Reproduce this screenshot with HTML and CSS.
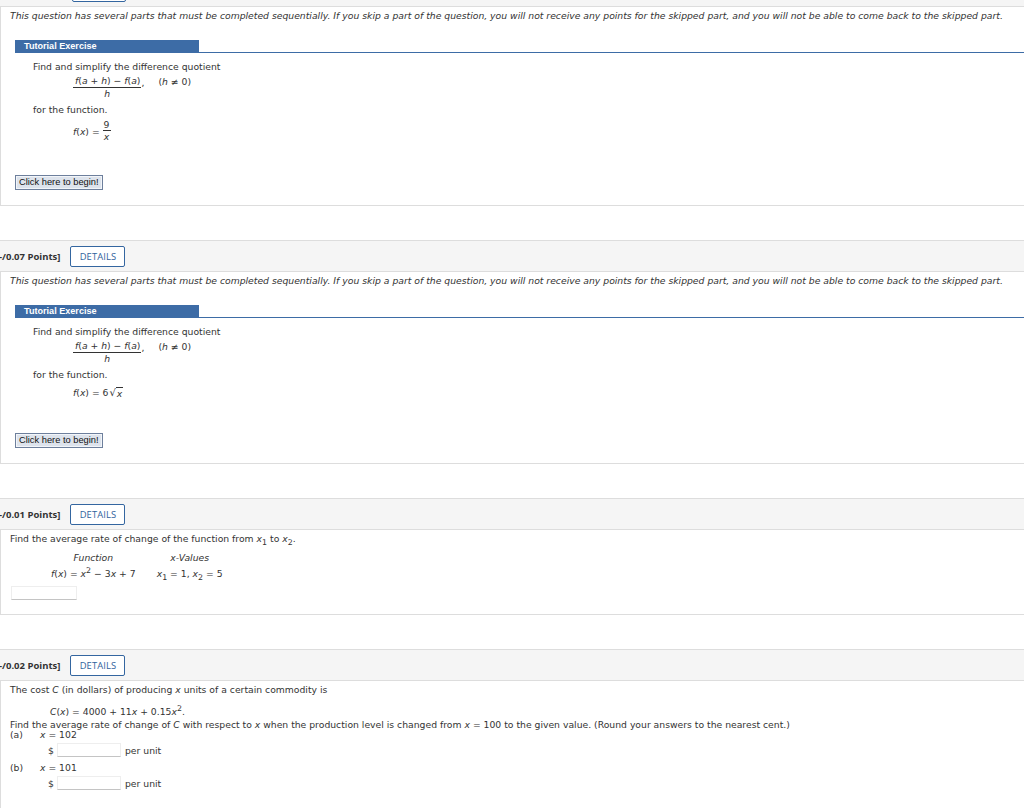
FILE: index.html
```html
<!DOCTYPE html>
<html lang="en">
<head>
<meta charset="utf-8">
<title>Questions</title>
<link rel="stylesheet" href="styles.css">
</head>
<body>

<section class="question q-partial">
  <div class="qhead qhead-top"><span class="details-edge"></span></div>
  <div class="qbody">
    <p class="note">This question has several parts that must be completed sequentially. If you skip a part of the question, you will not receive any points for the skipped part, and you will not be able to come back to the skipped part.</p>
    <div class="tutorial">
      <div class="tut-bar"><span class="tut-label">Tutorial Exercise</span></div>
      <div class="tut-content">
        <p class="line l-find">Find and simplify the difference quotient</p>
        <div class="formula dq">
          <span class="frac"><span class="num"><i>f</i>(<i>a</i> + <i>h</i>) − <i>f</i>(<i>a</i>)</span><span class="den"><i>h</i></span></span><span class="comma">,</span><span class="cond">(<i>h</i> ≠ 0)</span>
        </div>
        <p class="line l-for">for the function.</p>
        <div class="formula fx fx-frac">
          <span><i>f</i>(<i>x</i>) =&nbsp;</span><span class="frac small"><span class="num">9</span><span class="den"><i>x</i></span></span>
        </div>
      </div>
      <button class="begin" type="button">Click here to begin!</button>
    </div>
  </div>
</section>

<section class="question">
  <div class="qhead"><span class="pts">-/0.07 Points]</span><span class="details">DETAILS</span></div>
  <div class="qbody">
    <p class="note">This question has several parts that must be completed sequentially. If you skip a part of the question, you will not receive any points for the skipped part, and you will not be able to come back to the skipped part.</p>
    <div class="tutorial">
      <div class="tut-bar"><span class="tut-label">Tutorial Exercise</span></div>
      <div class="tut-content">
        <p class="line l-find">Find and simplify the difference quotient</p>
        <div class="formula dq">
          <span class="frac"><span class="num"><i>f</i>(<i>a</i> + <i>h</i>) − <i>f</i>(<i>a</i>)</span><span class="den"><i>h</i></span></span><span class="comma">,</span><span class="cond">(<i>h</i> ≠ 0)</span>
        </div>
        <p class="line l-for">for the function.</p>
        <div class="formula fx fx-root">
          <span><i>f</i>(<i>x</i>) = 6</span><span class="root"><span class="radical">√</span><span class="radicand"><i>x</i></span></span>
        </div>
      </div>
      <button class="begin begin-2" type="button">Click here to begin!</button>
    </div>
  </div>
</section>

<section class="question">
  <div class="qhead"><span class="pts">-/0.01 Points]</span><span class="details">DETAILS</span></div>
  <div class="qbody q3">
    <p class="line">Find the average rate of change of the function from <i>x</i><sub>1</sub> to <i>x</i><sub>2</sub>.</p>
    <div class="fn-table">
      <span class="th">Function</span>
      <span class="th"><i>x</i>-Values</span>
      <span class="td"><i>f</i>(<i>x</i>) = <i>x</i><sup>2</sup> − 3<i>x</i> + 7</span>
      <span class="td"><i>x</i><sub>1</sub> = 1, <i>x</i><sub>2</sub> = 5</span>
    </div>
    <input class="answer answer-wide" type="text" aria-label="answer">
  </div>
</section>

<section class="question">
  <div class="qhead"><span class="pts">-/0.02 Points]</span><span class="details">DETAILS</span></div>
  <div class="qbody q4">
    <p class="line">The cost <i>C</i> (in dollars) of producing <i>x</i> units of a certain commodity is</p>
    <p class="line cost-eq"><i>C</i>(<i>x</i>) = 4000 + 11<i>x</i> + 0.15<i>x</i><sup>2</sup>.</p>
    <p class="line tight">Find the average rate of change of <i>C</i> with respect to <i>x</i> when the production level is changed from <i>x</i> = 100 to the given value. (Round your answers to the nearest cent.)</p>
    <div class="parts">
      <span class="plabel">(a)</span><span class="pval"><i>x</i> = 102</span>
      <span></span><span class="arow"><span class="dollar">$</span><input class="answer" type="text" aria-label="part a"><span class="unit">per unit</span></span>
      <span class="plabel">(b)</span><span class="pval"><i>x</i> = 101</span>
      <span></span><span class="arow"><span class="dollar">$</span><input class="answer" type="text" aria-label="part b"><span class="unit">per unit</span></span>
    </div>
  </div>
</section>

</body>
</html>
```

FILE: styles.css
```css
html, body {
  margin: 0;
  padding: 0;
  background: #ffffff;
}

body {
  font-family: "DejaVu Sans", Verdana, sans-serif;
  font-size: 9.25px;
  color: #333333;
  overflow: hidden;
}

p { margin: 0; }

i { font-style: italic; }

sup {
  font-size: 85%;
  line-height: 0;
  vertical-align: 4px;
}

sub {
  font-size: 85%;
  line-height: 0;
  vertical-align: -3px;
}

.question {
  margin-bottom: 34px;
}

/* header band */
.qhead {
  display: flex;
  align-items: center;
  height: 30px;
  background: #f5f5f5;
  border-top: 1px solid #dddddd;
  border-bottom: 1px solid #dddddd;
}

.qhead-top {
  margin-top: -24px;
  border-top: none;
}

.details-edge {
  display: block;
  margin-left: 72px;
  width: 52px;
  height: 19px;
  border: 1px solid #3466a0;
  border-radius: 2px;
  background: #ffffff;
}

.pts {
  font-family: "Open Sans", "DejaVu Sans", sans-serif;
  font-weight: 700;
  font-size: 9.5px;
  color: #333333;
  margin-left: -1px;
}

.details {
  margin-left: 10px;
  width: 53px;
  height: 19px;
  border: 1px solid #3466a0;
  border-radius: 2px;
  background: #ffffff;
  color: #2f629c;
  font-family: "Open Sans", "DejaVu Sans", sans-serif;
  font-size: 9.4px;
  letter-spacing: 0.1px;
  display: flex;
  align-items: center;
  justify-content: center;
}

/* body */
.qbody {
  border-left: 1px solid #dddddd;
  border-bottom: 1px solid #dddddd;
  padding: 2px 0 15px 9px;
}

.note {
  font-style: italic;
  line-height: 13px;
  white-space: nowrap;
}

.line {
  line-height: 13px;
}

/* tutorial exercise */
.tutorial {
  margin-top: 18px;
  margin-left: 5px;
}

.tut-bar {
  border-bottom: 1px solid #3d6ca6;
}

.tut-label {
  display: block;
  width: 175px;
  height: 12px;
  line-height: 12px;
  padding-left: 9px;
  background: #3d6ca6;
  color: #ffffff;
  font-family: "Liberation Sans", Arial, sans-serif;
  font-weight: 700;
  font-size: 9.1px;
}

.tut-content {
  padding-left: 18px;
}

.l-find {
  margin-top: 7px;
}

.formula {
  margin-left: 40px;
  display: flex;
  align-items: center;
}

.dq {
  margin-top: 2px;
  align-items: flex-start;
}

.frac {
  display: inline-flex;
  flex-direction: column;
  align-items: center;
}

.frac .num {
  border-bottom: 1px solid #333333;
  line-height: 12px;
  padding: 0 1px 0 2px;
}

.frac .den {
  line-height: 12px;
}

.comma {
  line-height: 12px;
  margin-top: 2px;
}

.cond {
  line-height: 12px;
  margin-left: 14px;
  margin-top: 1px;
}

.l-for {
  margin-top: 3px;
}

.fx {
  margin-top: 5px;
  line-height: 13px;
}

.fx-frac {
  margin-top: 3px;
}

.frac.small .num {
  line-height: 11px;
  padding: 0 1px;
}

.frac.small .den {
  line-height: 12px;
}

.root {
  display: inline-flex;
  align-items: flex-end;
  margin-left: 1px;
}

.radical {
  font-size: 10px;
  line-height: 13px;
}

.radicand {
  border-top: 1px solid #333333;
  line-height: 11px;
  padding: 0 1px;
  margin-top: 1px;
}

.begin {
  display: block;
  margin-top: 32px;
  height: 15px;
  padding: 0 3px;
  font-family: "Liberation Sans", Arial, sans-serif;
  font-size: 9.3px;
  color: #111111;
  background: #dde3ec;
  border: 1px solid #6d7f9c;
  box-shadow: inset 0 0 0 1px #f2f5f9;
  line-height: 13px;
}

.begin-2 {
  margin-top: 34px;
}

/* question 3 */
.q3 {
  padding-top: 2px;
  padding-bottom: 14px;
}

.fn-table {
  display: grid;
  grid-template-columns: auto auto;
  column-gap: 21px;
  justify-content: start;
  justify-items: center;
  margin: 6px 0 0 41px;
}

.fn-table .th {
  font-style: italic;
  line-height: 13px;
}

.fn-table .td {
  line-height: 13px;
  margin-top: 3px;
}

.answer {
  display: block;
  box-sizing: border-box;
  height: 14px;
  padding: 0;
  border: 1px solid #eeeeee;
  border-bottom-color: #c4c4c4;
  background: #ffffff;
}

.answer-wide {
  width: 66px;
  margin: 6px 0 0 1px;
}

/* question 4 */
.q4 {
  padding-top: 2px;
  padding-bottom: 30px;
}

.cost-eq {
  margin: 9px 0 0 40px;
}

.tight {
  margin-top: 2px;
  line-height: 10px;
}

.parts {
  display: grid;
  grid-template-columns: 30px auto;
  justify-content: start;
  align-items: center;
}

.plabel, .pval {
  line-height: 10px;
}

.arow {
  display: flex;
  align-items: center;
  margin: 3px 0 6px 0;
}

.dollar {
  margin-left: 8px;
  width: 9px;
}

.arow .answer {
  width: 64px;
}

.unit {
  margin-left: 4px;
}
```
